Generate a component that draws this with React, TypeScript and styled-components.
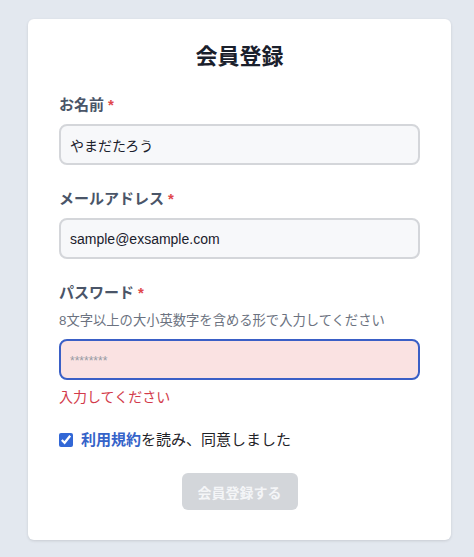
import React from "react";
import styled, { createGlobalStyle } from "styled-components";

const GlobalStyle = createGlobalStyle`
  html, body {
    margin: 0;
    padding: 0;
    background: #e3e8ef;
  }
  body {
    font-family: "Liberation Sans", "Noto Sans CJK JP", sans-serif;
  }
`;

const Page = styled.div`
  display: flex;
  justify-content: flex-start;
  padding: 19px 23px 16px 28px;
`;

const Card = styled.form`
  width: 423px;
  box-sizing: border-box;
  background: #ffffff;
  border-radius: 6px;
  box-shadow: 0 1px 3px rgba(0, 0, 0, 0.12);
  padding: 23px 31px 30px;
  display: flex;
  flex-direction: column;
  gap: 23px;
`;

const Title = styled.h1`
  margin: 0 0 -1px;
  font-size: 22px;
  line-height: 30px;
  font-weight: 700;
  color: #1a202c;
  text-align: center;
`;

const Field = styled.div`
  display: flex;
  flex-direction: column;
  gap: 8px;
`;

const Label = styled.label`
  font-size: 15px;
  line-height: 22px;
  font-weight: 700;
  color: #4a5568;
`;

const Required = styled.span`
  color: #e0474c;
  margin-left: 4px;
`;

const Hint = styled.p`
  margin: -1px 0 0;
  font-size: 13.3px;
  line-height: 20px;
  color: #6b7280;
`;

const Input = styled.input<{ $invalid?: boolean }>`
  box-sizing: border-box;
  width: 100%;
  height: 41px;
  padding: 0 9px;
  font-family: inherit;
  font-size: 14px;
  color: #1a202c;
  border-radius: 8px;
  border: 2px solid ${(p) => (p.$invalid ? "#3a5fc6" : "#d4d6da")};
  background: ${(p) => (p.$invalid ? "#fae2e2" : "#f7f8fa")};
  outline: none;

  &::placeholder {
    color: #969aa2;
    font-size: 12px;
  }
`;

const ErrorText = styled.p`
  margin: -1px 0 0;
  font-size: 14px;
  line-height: 20px;
  color: #d23a4a;
`;

const CheckRow = styled.label`
  display: flex;
  align-items: center;
  gap: 8px;
  font-size: 15px;
  line-height: 20px;
  color: #1f2328;
`;

const Checkbox = styled.input`
  width: 14px;
  height: 14px;
  margin: 0;
  accent-color: #3267d6;
`;

const TermsLink = styled.a`
  color: #3563c9;
  font-weight: 700;
  text-decoration: none;
`;

const SubmitButton = styled.button`
  align-self: center;
  margin-top: 0;
  width: 116px;
  height: 37px;
  border: none;
  border-radius: 6px;
  background: #d3d6da;
  color: #f4f5f7;
  font-family: inherit;
  font-size: 14px;
  font-weight: 700;
`;

export default function App() {
  return (
    <>
      <GlobalStyle />
      <Page>
        <Card onSubmit={(e) => e.preventDefault()}>
          <Title>会員登録</Title>
          <Field>
            <Label htmlFor="name">
              お名前<Required>*</Required>
            </Label>
            <Input id="name" defaultValue="やまだたろう" />
          </Field>
          <Field>
            <Label htmlFor="email">
              メールアドレス<Required>*</Required>
            </Label>
            <Input id="email" defaultValue="sample@exsample.com" />
          </Field>
          <Field>
            <Label htmlFor="password">
              パスワード<Required>*</Required>
            </Label>
            <Hint>8文字以上の大小英数字を含める形で入力してください</Hint>
            <Input
              id="password"
              type="password"
              placeholder="********"
              $invalid
              autoFocus
            />
            <ErrorText>入力してください</ErrorText>
          </Field>
          <CheckRow>
            <Checkbox type="checkbox" defaultChecked />
            <span>
              <TermsLink href="#">利用規約</TermsLink>を読み、同意しました
            </span>
          </CheckRow>
          <SubmitButton type="submit" disabled>
            会員登録する
          </SubmitButton>
        </Card>
      </Page>
    </>
  );
}
